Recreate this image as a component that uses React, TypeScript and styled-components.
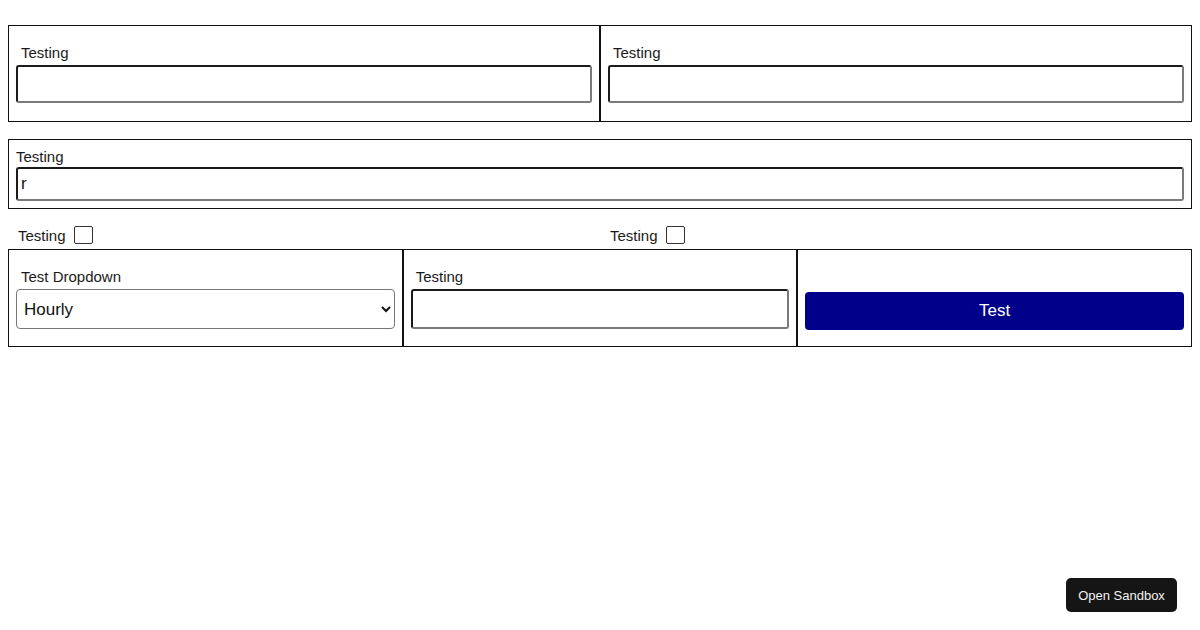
import { useState } from "react"
import styled, { createGlobalStyle } from "styled-components"

const GlobalStyle = createGlobalStyle`
    body {
        margin: 8px;
        background: #fff;
        font-family: "Liberation Sans", Arial, sans-serif;
        color: #1a1a1a;
    }
`

export default function App() {
    const [text, setText] = useState("r")
    const [period, setPeriod] = useState("hourly")

    return (
        <>
            <GlobalStyle />
            <Form onSubmit={(e) => e.preventDefault()}>
                <Row $cols={2} $spaced>
                    <Cell>
                        <Label $indent>Testing</Label>
                        <TextInput $height={38} $gap={4} $bottom={11} />
                    </Cell>
                    <Cell>
                        <Label $indent>Testing</Label>
                        <TextInput $height={38} $gap={4} $bottom={11} />
                    </Cell>
                </Row>

                <Row $cols={1}>
                    <Cell>
                        <Label $top={1}>Testing</Label>
                        <TextInput
                            $height={34}
                            $gap={2}
                            value={text}
                            onChange={(e) => setText(e.target.value)}
                        />
                    </Cell>
                </Row>

                <CheckRow>
                    <CheckField>
                        Testing
                        <Check type="checkbox" />
                    </CheckField>
                    <CheckField>
                        Testing
                        <Check type="checkbox" />
                    </CheckField>
                </CheckRow>

                <Row $cols={3}>
                    <Cell>
                        <Label $indent $top={11}>Test Dropdown</Label>
                        <Select value={period} onChange={(e) => setPeriod(e.target.value)}>
                            <option value="hourly">Hourly</option>
                            <option value="daily">Daily</option>
                            <option value="weekly">Weekly</option>
                        </Select>
                    </Cell>
                    <Cell>
                        <Label $indent $top={11}>Testing</Label>
                        <TextInput $height={40} $gap={4} $bottom={10} />
                    </Cell>
                    <Cell>
                        <Label $indent $top={11}>&nbsp;</Label>
                        <SubmitButton type="submit">Test</SubmitButton>
                    </Cell>
                </Row>
            </Form>
            <SandboxButton type="button">Open Sandbox</SandboxButton>
        </>
    )
}

const Form = styled.form`
    padding-top: 17px;
    display: flex;
    flex-direction: column;
`

const Row = styled.div<{ $cols: number; $spaced?: boolean }>`
    display: grid;
    grid-template-columns: repeat(${(p) => p.$cols}, 1fr);
    margin-bottom: ${(p) => (p.$spaced ? "17px" : "0")};
`

const Cell = styled.div`
    border: 1px solid #111;
    padding: 7px;
    display: flex;
    flex-direction: column;
    min-width: 0;
`

const Label = styled.label<{ $indent?: boolean; $top?: number }>`
    display: block;
    font-size: 15px;
    line-height: 17px;
    margin: ${(p) => p.$top ?? 11}px 0 0 ${(p) => (p.$indent ? "5px" : "0")};
`

const TextInput = styled.input<{ $height: number; $gap: number; $bottom?: number }>`
    box-sizing: border-box;
    width: 100%;
    height: ${(p) => p.$height}px;
    margin: ${(p) => p.$gap}px 0 ${(p) => p.$bottom ?? 0}px;
    padding: 0 3px;
    border: 2px solid;
    border-color: #1b1b1b #7a7a7a #7a7a7a #1b1b1b;
    border-radius: 3px;
    font-family: "Liberation Sans", Arial, sans-serif;
    font-size: 17px;
    color: #111;
    background: #fff;
    outline: none;
`

const CheckRow = styled.div`
    display: grid;
    grid-template-columns: 1fr 1fr;
    height: 40px;
`

const CheckField = styled.label`
    display: flex;
    align-items: center;
    gap: 8px;
    padding: 17px 0 0 10px;
    font-size: 15px;
    line-height: 17px;
    height: 18px;
`

const Check = styled.input`
    appearance: none;
    width: 19px;
    height: 18px;
    margin: 0;
    border: 1px solid #333;
    border-radius: 2px;
    background: #fff;
    &:checked {
        background: #00008b;
    }
`

const Select = styled.select`
    box-sizing: border-box;
    width: 100%;
    height: 40px;
    margin: 4px 0 10px;
    padding: 0 4px 0 3px;
    border: 1px solid #777;
    border-radius: 4px;
    background: #fff;
    color: #111;
    font-family: "Liberation Sans", Arial, sans-serif;
    font-size: 17px;
`

const SubmitButton = styled.button`
    height: 38px;
    margin-top: 7px;
    border: none;
    border-radius: 4px;
    background: #00008b;
    color: #fff;
    font-family: "Liberation Sans", Arial, sans-serif;
    font-size: 17px;
    cursor: pointer;
`

const SandboxButton = styled.button`
    position: fixed;
    right: 23px;
    bottom: 18px;
    width: 111px;
    height: 34px;
    border: none;
    border-radius: 5px;
    background: #151515;
    color: #f2f2f2;
    font-family: "Liberation Sans", Arial, sans-serif;
    font-size: 13px;
    cursor: pointer;
`
